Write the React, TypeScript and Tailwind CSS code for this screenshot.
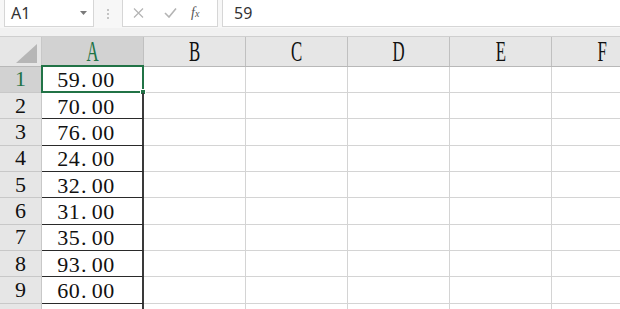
import React from 'react';

const cols = ['A', 'B', 'C', 'D', 'E', 'F'];
const values = ['59.00', '70.00', '76.00', '24.00', '32.00', '31.00', '35.00', '93.00', '60.00', ''];

const serif = "font-['Liberation_Serif',serif]";
const sans = "font-['Noto_Sans','Liberation_Sans',sans-serif]";

// each character sits in a fixed-width box, like a half-width CJK font
function Spaced({ text }: { text: string }) {
  return (
    <span className="flex">
      {text.split('').map((c, i) => (
        <span key={i} className={c === '.' ? 'w-[11.5px] pl-[1px] text-left' : 'w-[11.5px] text-center'}>
          {c}
        </span>
      ))}
    </span>
  );
}

function FormulaBar() {
  return (
    <div className="flex h-[28px] bg-[#f7f7f7]">
      {/* name box */}
      <div className="ml-[4px] flex h-[27px] w-[90px] items-center justify-between border-x border-b border-[#d6d6d6] bg-white pl-[6px] pr-[6px]">
        <span className={`${sans} text-[16px] leading-none text-[#333]`}>A1</span>
        <svg width="7" height="4" viewBox="0 0 7 4">
          <path d="M0 0h7L3.5 4z" fill="#7a7a7a" />
        </svg>
      </div>
      <div className="flex w-[28px] flex-col items-center justify-center gap-[2px]">
        <span className="h-[2px] w-[2px] bg-[#c4c4c4]" />
        <span className="h-[2px] w-[2px] bg-[#c4c4c4]" />
        <span className="h-[2px] w-[2px] bg-[#c4c4c4]" />
      </div>
      {/* cancel / enter / fx */}
      <div className="flex h-[27px] w-[96px] items-center border-x border-b border-[#d6d6d6] bg-white">
        <svg className="ml-[10px]" width="11" height="10" viewBox="0 0 11 10">
          <path d="M1 0.5l9 9M10 0.5l-9 9" stroke="#b4b4b4" strokeWidth="1.2" />
        </svg>
        <svg className="ml-[20px]" width="13" height="10" viewBox="0 0 13 10">
          <path d="M1 5l4 4 7-8.5" stroke="#b4b4b4" strokeWidth="1.6" fill="none" />
        </svg>
        <span className={`${serif} ml-[14px] italic text-[14px] leading-none text-[#555]`}>
          f<span className="text-[10px]">x</span>
        </span>
      </div>
      <div className="ml-[4px] flex h-[27px] flex-1 items-center border-l border-b border-[#d6d6d6] bg-white pl-[11px]">
        <span className={`${sans} text-[16px] leading-none text-[#333]`}>59</span>
      </div>
    </div>
  );
}

function HeaderRow() {
  return (
    <div className="flex h-[29.5px] border-b border-[#b8b8b8] bg-[#e6e6e6]">
      <div className="flex w-[42px] shrink-0 items-end justify-end border-r border-[#c8c8c8] pb-[3px] pr-[4px]">
        <svg width="21" height="19" viewBox="0 0 21 19">
          <path d="M21 0V19H0z" fill="#b6b6b6" />
        </svg>
      </div>
      {cols.map((c, i) => (
        <div
          key={c}
          className={`flex w-[102px] shrink-0 items-center justify-center border-r border-[#c0c0c0] ${
            i === 0 ? 'bg-[#d2d2d2] text-[#217346]' : 'text-[#111]'
          }`}
        >
          <span className={`${serif} inline-block scale-x-[0.58] text-[29px] leading-none`}>{c}</span>
        </div>
      ))}
    </div>
  );
}

export default function App() {
  return (
    <div className="relative h-[309px] w-[620px] overflow-hidden bg-white">
      <FormulaBar />
      <div className="h-[9px] border-b border-[#cfcfcf] bg-[#f1f1f1]" />
      <HeaderRow />

      {values.map((v, r) => (
        <div key={r} className="flex h-[26.35px]">
          <div
            className={`flex w-[42px] shrink-0 items-center justify-center border-r border-b border-[#c8c8c8] ${
              r === 0 ? 'bg-[#d2d2d2] text-[#217346]' : 'bg-[#e6e6e6] text-[#111]'
            }`}
          >
            {v && <span className={`${serif} text-[22px] leading-none`}>{r + 1}</span>}
          </div>
          {cols.map((c, i) =>
            i === 0 ? (
              <div
                key={c}
                className="relative flex w-[102px] shrink-0 items-center border-r-2 border-b border-r-[#3a3a3a] border-b-[#2a2a2a] pl-[15px] pt-[2px]"
              >
                <span className={`${serif} text-[22px] leading-none text-[#111]`}>
                  <Spaced text={v} />
                </span>
                {r === 0 && (
                  <div className="absolute -top-[2px] -left-[1px] -right-[2px] -bottom-[1px] border-2 border-[#217346]">
                    <span className="absolute -right-[4px] -bottom-[4px] h-[6px] w-[6px] border border-white bg-[#217346]" />
                  </div>
                )}
              </div>
            ) : (
              <div key={c} className="w-[102px] shrink-0 border-r border-b border-[#d4d4d4]" />
            )
          )}
        </div>
      ))}
    </div>
  );
}
